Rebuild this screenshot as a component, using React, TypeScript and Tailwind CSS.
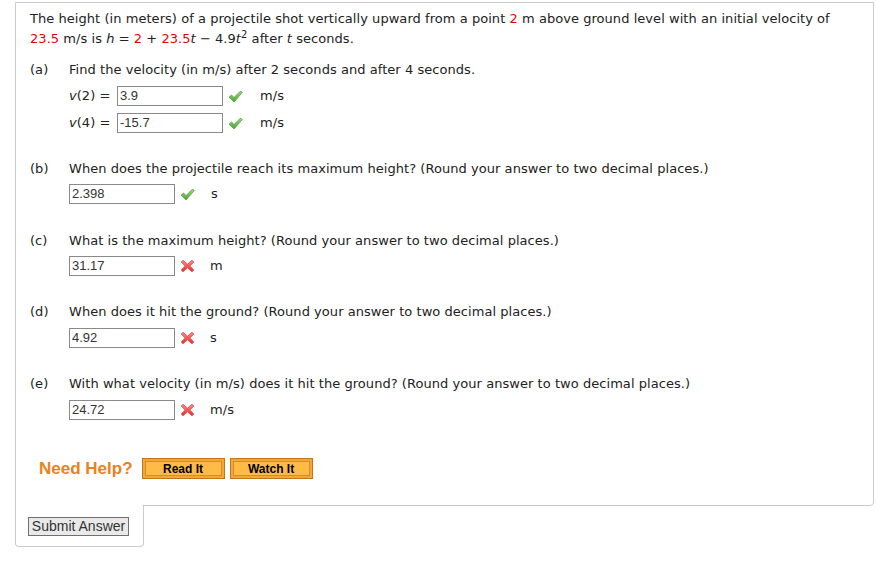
import type { ReactNode } from 'react';

function Check() {
  return (
    <svg width="15" height="13" viewBox="0 0 15 13" className="shrink-0">
      <defs>
        <linearGradient id="ck" x1="0" y1="0" x2="0" y2="1">
          <stop offset="0" stopColor="#9edc7a" />
          <stop offset="1" stopColor="#4aa534" />
        </linearGradient>
      </defs>
      <path
        d="M1 7.2 L3.6 5 L6 7.6 L12.6 1 L14.2 2.6 L6.1 12 Z"
        fill="url(#ck)"
        stroke="#5b9c45"
        strokeWidth="0.8"
        strokeLinejoin="round"
      />
    </svg>
  );
}

function Cross() {
  return (
    <svg width="15" height="14" viewBox="0 0 15 14" className="shrink-0">
      <defs>
        <linearGradient id="cx" x1="0" y1="0" x2="0" y2="1">
          <stop offset="0" stopColor="#ff8a8a" />
          <stop offset="1" stopColor="#e22a2a" />
        </linearGradient>
      </defs>
      <path
        d="M1.2 3 L3 1.2 L7.5 5.2 L12 1.2 L13.8 3 L9.8 7 L13.8 11 L12 12.8 L7.5 8.8 L3 12.8 L1.2 11 L5.2 7 Z"
        fill="url(#cx)"
        stroke="#e04848"
        strokeWidth="0.8"
        strokeLinejoin="round"
      />
    </svg>
  );
}

function Field({ value }: { value: string }) {
  return (
    <div className="flex h-[20px] w-[106px] shrink-0 items-center border border-[#8a8a8a] bg-white pl-[2px] font-['Liberation_Sans',Arial,sans-serif] text-[13px] tracking-normal text-[#333]">
      {value}
    </div>
  );
}

function Answer({ value, ok, unit, unitGap }: { value: string; ok: boolean; unit: string; unitGap: string }) {
  return (
    <div className="flex items-center">
      <Field value={value} />
      <span className="ml-[5px] flex w-[15px] justify-center">{ok ? <Check /> : <Cross />}</span>
      <span className={unitGap}>{unit}</span>
    </div>
  );
}

function Part({ label, children, className }: { label: string; children: ReactNode; className?: string }) {
  return (
    <div className={`flex ${className ?? ''}`}>
      <span className="w-[39px] shrink-0">{label}</span>
      <div className="flex-1">{children}</div>
    </div>
  );
}

function HelpButton({ label }: { label: string }) {
  return (
    <div className="h-[21px] w-[83px] border border-[#c27619] bg-[#f7a534] p-[2px]">
      <div className="flex h-full items-center justify-center border border-[#d48d2c] bg-[#ffbb45] font-['Liberation_Sans',Arial,sans-serif] text-[12px] font-bold tracking-normal text-black">
        {label}
      </div>
    </div>
  );
}

const red = 'text-[#ee0000]';

export default function App() {
  return (
    <div className="min-h-[562px] bg-white pt-[2px] font-['DejaVu_Sans',Verdana,sans-serif] text-[13px] leading-[20px] tracking-[0.05px] text-[#222]">
      <div className="ml-[15px] h-[504px] w-[859px] rounded-br-[4px] border border-[#cccccc] pl-[14px] pt-[6px]">
        <p>
          The height (in meters) of a projectile shot vertically upward from a point <span className={red}>2</span> m above
          ground level with an initial velocity of
          <br />
          <span className={red}>23.5</span> m/s is <i>h</i> = <span className={red}>2</span> +{' '}
          <span className={red}>23.5</span>
          <i>t</i> − 4.9<i>t</i>
          <sup className="text-[10px]">2</sup> after <i>t</i> seconds.
        </p>

        <Part label="(a)" className="mt-[11px]">
          <p>Find the velocity (in m/s) after 2 seconds and after 4 seconds.</p>
          <div className="mt-[6px] flex items-center">
            <span className="w-[48px]">
              <i>v</i>(2) =
            </span>
            <Answer value="3.9" ok unit="m/s" unitGap="ml-[17px]" />
          </div>
          <div className="mt-[7px] flex items-center">
            <span className="w-[48px]">
              <i>v</i>(4) =
            </span>
            <Answer value="-15.7" ok unit="m/s" unitGap="ml-[17px]" />
          </div>
        </Part>

        <Part label="(b)" className="mt-[26px]">
          <p>When does the projectile reach its maximum height? (Round your answer to two decimal places.)</p>
          <div className="mt-[5px]">
            <Answer value="2.398" ok unit="s" unitGap="ml-[16px]" />
          </div>
        </Part>

        <Part label="(c)" className="mt-[27px]">
          <p>What is the maximum height? (Round your answer to two decimal places.)</p>
          <div className="mt-[5px]">
            <Answer value="31.17" ok={false} unit="m" unitGap="ml-[15px]" />
          </div>
        </Part>

        <Part label="(d)" className="mt-[26px]">
          <p>When does it hit the ground? (Round your answer to two decimal places.)</p>
          <div className="mt-[6px]">
            <Answer value="4.92" ok={false} unit="s" unitGap="ml-[15px]" />
          </div>
        </Part>

        <Part label="(e)" className="mt-[26px]">
          <p>With what velocity (in m/s) does it hit the ground? (Round your answer to two decimal places.)</p>
          <div className="mt-[6px]">
            <Answer value="24.72" ok={false} unit="m/s" unitGap="ml-[15px]" />
          </div>
        </Part>

        <div className="mt-[38px] ml-[9px] flex items-center">
          <span className="font-['Liberation_Sans',Arial,sans-serif] text-[17px] font-bold tracking-normal text-[#e8821c]">
            Need Help?
          </span>
          <div className="ml-[9px] flex gap-[5px]">
            <HelpButton label="Read It" />
            <HelpButton label="Watch It" />
          </div>
        </div>
      </div>

      <div className="-mt-px ml-[15px] h-[42px] w-[129px] rounded-b-[4px] border border-t-0 border-[#cccccc] bg-white pl-[12px] pt-[12px]">
        <button className="h-[19px] w-[101px] border border-[#707070] bg-[#e9e9e9] font-['Liberation_Sans',Arial,sans-serif] text-[14px] leading-[17px] tracking-normal text-[#333]">
          Submit Answer
        </button>
      </div>
    </div>
  );
}
